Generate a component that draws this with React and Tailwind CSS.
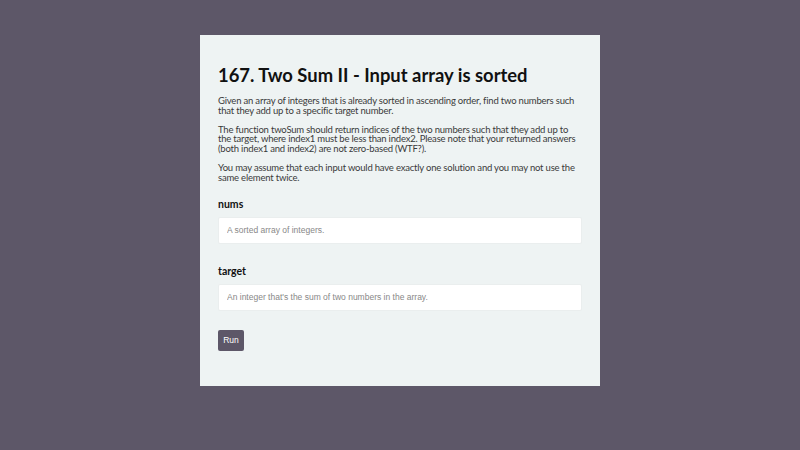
import { useState } from 'react'

const RALEWAY = { fontFamily: 'Lato, "Open Sans", sans-serif' }
const ARIAL = { fontFamily: '"Liberation Sans", Arial, sans-serif' }

export default function App() {
  const [nums, setNums] = useState('')
  const [target, setTarget] = useState('')

  return (
    <div className="h-[450px] w-full bg-[#5d5768] flex justify-center pt-[35px]" style={RALEWAY}>
      <div className="w-[400px] h-[351px] bg-[#eef3f3] px-[18px] pt-[28px]">
        <h1 className="text-[18.4px] leading-[24px] font-bold text-[#111]">167. Two Sum II - Input array is sorted</h1>

        <div className="mt-[9px] text-[9.5px] leading-[9.8px] tracking-[-0.2px] text-[#3a3a3a] space-y-[9px]">
          <p>
            Given an array of integers that is already sorted in ascending order, find two numbers such that they add
            up to a specific target number.
          </p>
          <p>
            The function twoSum should return indices of the two numbers such that they add up to the target, where
            index1 must be less than index2. Please note that your returned answers (both index1 and index2) are not
            zero-based (WTF?).
          </p>
          <p>You may assume that each input would have exactly one solution and you may not use the same element twice.</p>
        </div>

        <label className="block mt-[14px] text-[10.5px] leading-[14px] font-bold text-[#111]">nums</label>
        <input
          value={nums}
          onChange={(e) => setNums(e.target.value)}
          placeholder="A sorted array of integers."
          className="block mt-[6px] w-full h-[27px] bg-white border border-[#eaeeee] rounded-[2px] px-[8px] text-[8.5px] text-[#333] placeholder:text-[#888] outline-none"
          style={ARIAL}
        />

        <label className="block mt-[20px] text-[10.5px] leading-[14px] font-bold text-[#111]">target</label>
        <input
          value={target}
          onChange={(e) => setTarget(e.target.value)}
          placeholder="An integer that's the sum of two numbers in the array."
          className="block mt-[6px] w-full h-[27px] bg-white border border-[#eaeeee] rounded-[2px] px-[8px] text-[8.5px] text-[#333] placeholder:text-[#888] outline-none"
          style={ARIAL}
        />

        <button
          className="mt-[19px] w-[26px] h-[21px] bg-[#5d5768] text-white text-[8.5px] rounded-[2px] flex items-center justify-center"
          style={ARIAL}
        >
          Run
        </button>
      </div>
    </div>
  )
}
